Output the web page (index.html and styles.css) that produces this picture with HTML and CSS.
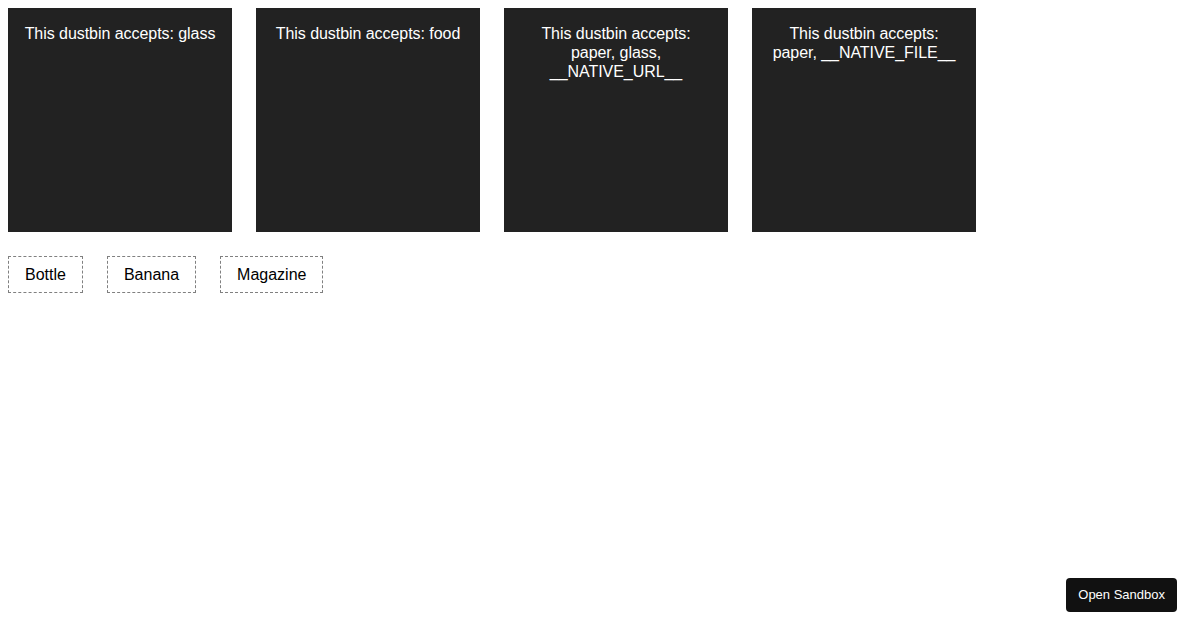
FILE: index.html
```html
<!DOCTYPE html>
<html>
<head>
<meta charset="utf-8">
<link rel="stylesheet" href="styles.css">
</head>
<body>
<div class="row bins">
  <div class="dustbin">This dustbin accepts: glass</div>
  <div class="dustbin">This dustbin accepts: food</div>
  <div class="dustbin">This dustbin accepts: paper, glass, __NATIVE_URL__</div>
  <div class="dustbin">This dustbin accepts: paper, __NATIVE_FILE__</div>
</div>
<div class="row items">
  <div class="box">Bottle</div>
  <div class="box">Banana</div>
  <div class="box">Magazine</div>
</div>
<a class="sandbox">Open Sandbox</a>
</body>
</html>
```
FILE: styles.css
```css
html, body {
  margin: 0;
  background: #fff;
}
body {
  padding: 8px;
  font-family: "Liberation Sans", Arial, sans-serif;
  font-size: 16px;
  line-height: 19px;
}
.row {
  display: flex;
  gap: 24px;
  margin-bottom: 24px;
}
.dustbin {
  box-sizing: border-box;
  width: 224px;
  height: 224px;
  padding: 16px 14px;
  background: #222;
  color: #fff;
  text-align: center;
  letter-spacing: -0.05px;
}
.box {
  border: 1px dashed gray;
  background: #fff;
  padding: 8px 16px;
  color: #000;
}
.sandbox {
  position: fixed;
  right: 23px;
  bottom: 18px;
  box-sizing: border-box;
  height: 34px;
  padding: 0 12px;
  display: flex;
  align-items: center;
  background: #111;
  color: #fff;
  border-radius: 4px;
  font-size: 13px;
  line-height: 16px;
  font-family: "Liberation Sans", Arial, sans-serif;
}
```
